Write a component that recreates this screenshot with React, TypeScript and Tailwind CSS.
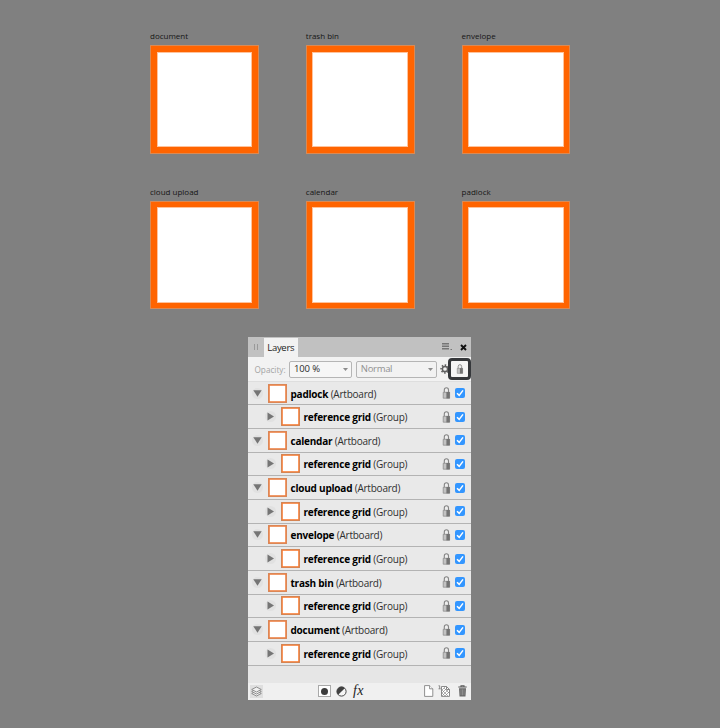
import { useState } from 'react';

const ARTBOARDS = ['document', 'trash bin', 'envelope', 'cloud upload', 'calendar', 'padlock'];

const LockIcon = ({ className = '' }: { className?: string }) => (
  <svg width="9" height="12" viewBox="0 0 9 12" className={className}>
    <path d="M2.3 5.5V3a2.1 2.2 0 0 1 4.2 0v2.5" fill="#eee" stroke="#858585" strokeWidth="1.1" />
    <path d="M1.2 5.3h6.4v5.9H1.2z" fill="#c2c2c2" stroke="#858585" strokeWidth="0.7" />
    <path d="M4.4 5h3.4v6.4H4.4z" fill="#737373" />
  </svg>
);

const GearIcon = () => (
  <svg width="10" height="10" viewBox="0 0 10 10">
    <circle cx="5" cy="5" r="3.9" fill="none" stroke="#606060" strokeWidth="1.6" strokeDasharray="1.55 1.513" strokeDashoffset="0.78" />
    <circle cx="5" cy="5" r="2.6" fill="none" stroke="#606060" strokeWidth="1.5" />
  </svg>
);

const Artboard = ({ name }: { name: string }) => (
  <div>
    <div className="h-[14px] whitespace-nowrap text-[8px] leading-[10px] text-[#161616]">{name}</div>
    <div className="h-[108.8px] w-[108.8px] border border-[#d98a55] bg-[#ff6400] p-[5.5px]">
      <div className="h-full w-full border border-[#ffc39c] bg-white" />
    </div>
  </div>
);

const Select = ({ value, className }: { value: string; className: string }) => (
  <div className={`flex h-[17px] items-center justify-between rounded-[2px] border border-[#b5b5b5] pl-[4px] pr-[3px] ${className}`}>
    <span>{value}</span>
    <svg width="5" height="3" viewBox="0 0 5 3">
      <path d="M0 0h5L2.5 3z" fill="#8c8c8c" />
    </svg>
  </div>
);

interface LayerRowProps {
  name: string;
  type: 'Artboard' | 'Group';
}

const LayerRow = ({ name, type }: LayerRowProps) => {
  const [visible, setVisible] = useState(true);
  const nested = type === 'Group';

  return (
    <div className={`flex h-[23.67px] items-center border-b border-[#b3b3b3] bg-[#e9e9e9] pr-[6px] ${nested ? 'pl-[17px]' : 'pl-[4px]'}`}>
      <div className="flex h-[11px] w-[11px] items-center justify-center rounded-full bg-[#e1e1e1]">
        <svg width="9" height="9" viewBox="0 0 9 9">
          <path d={nested ? 'M1.5 0.5v8L8 4.5z' : 'M0.3 1.3h8.4L4.5 7.7z'} fill="#757575" />
        </svg>
      </div>
      <svg className="ml-[4.5px] shrink-0" width="19" height="19" viewBox="0 0 19 19">
        <rect width="19" height="19" fill={nested ? '#c08a68' : '#d08a62'} />
        <rect x="0.6" y="0.6" width="17.8" height="17.8" fill={nested ? '#f87c34' : '#ee8144'} />
        <rect x="1.8" y="1.8" width="15.4" height="15.4" fill="#fff" />
      </svg>
      <div className="ml-[4px] flex-1 whitespace-nowrap pt-px text-[10px] leading-[14px] tracking-[-0.22px] text-[#303030]">
        <b className="font-bold text-black">{name}</b> ({type})
      </div>
      <LockIcon />
      <button
        onClick={() => setVisible(!visible)}
        className={`ml-[4px] h-[10px] w-[10px] rounded-[2px] ${visible ? 'bg-[#3396ff]' : 'bg-white'}`}
      >
        {visible && (
          <svg width="10" height="10" viewBox="0 0 10 10">
            <path d="M2 5.2L4.2 7.4L8 2.4" fill="none" stroke="#fff" strokeWidth="1.5" />
          </svg>
        )}
      </button>
    </div>
  );
};

const Footer = () => (
  <div className="flex h-[17.4px] items-center bg-[#f0f0f0] pl-[1.5px]">
    <div className="flex h-[13px] w-[13px] items-center justify-center bg-[#dfdfdf]">
      <svg width="11" height="11" viewBox="0 0 11 11" fill="#f0f0f0" stroke="#858585" strokeWidth="0.9">
        <path d="M0.7 7.5L5.5 5l4.8 2.5L5.5 10z" />
        <path d="M0.7 5.5L5.5 3l4.8 2.5L5.5 8z" />
        <path d="M0.7 3.5L5.5 1l4.8 2.5L5.5 6z" />
      </svg>
    </div>
    <div className="ml-[55.5px] flex h-[12px] w-[13px] items-center justify-center border border-[#a9a9a9] bg-white">
      <div className="h-[7px] w-[7px] rounded-full bg-[#3c3c3c]" />
    </div>
    <svg className="ml-[5px]" width="11" height="11" viewBox="0 0 11 11">
      <circle cx="5.5" cy="5.5" r="4.6" fill="#f5f5f5" stroke="#484848" strokeWidth="1" />
      <path d="M8.8 2.2A4.6 4.6 0 0 0 2.2 8.8z" fill="#404040" />
    </svg>
    <span className="ml-[6px] w-[12px] font-['Liberation_Serif',serif] text-[14px] italic leading-[14px] tracking-[0.3px] text-[#222]">fx</span>
    <svg className="ml-[59px]" width="10" height="12" viewBox="0 0 10 12" fill="#fff" stroke="#858585" strokeWidth="0.9">
      <path d="M0.6 0.6h5l3.2 3.2v7.6H0.6z" />
      <path d="M5.6 0.6v3.2h3.2" />
    </svg>
    <svg className="ml-[4px]" width="13" height="12" viewBox="0 0 13 12" stroke="#7d7d7d" strokeWidth="0.9">
      <path d="M3.5 1.5h5l3 3v6.9h-8z" fill="#fff" />
      <path d="M4 5l3-3M4 8l5-5M4 11l7-7M7 11l4-4M4 8l3 3M4 5l6 6M6 3l5 5" strokeWidth="0.6" />
      <path d="M8.5 1.5v3h3" fill="none" />
      <path d="M0.5 0.8h1.2v3M0.5 3.8h2.2" fill="none" />
    </svg>
    <svg className="ml-[6.5px]" width="9" height="12" viewBox="0 0 9 12">
      <path d="M0.3 2h8.4M3 1.6V0.7h3v0.9" fill="none" stroke="#595959" strokeWidth="1.1" />
      <path d="M1 3.3h7L7.5 11.4h-6z" fill="#666" />
      <path d="M3 4.3v6M4.5 4.3v6M6 4.3v6" stroke="#b7b7b7" strokeWidth="0.5" />
    </svg>
  </div>
);

const LayersPanel = () => (
  <div className="ml-[248px] mt-[27.2px] w-[223px] bg-[#e6e6e6]">
    <div className="flex h-[20.8px] items-end bg-[#c1c1c1]">
      <div className="mb-[7px] ml-[6px] flex h-[6px] w-[4px] justify-between">
        <i className="w-px bg-[#999]" />
        <i className="w-px bg-[#999]" />
      </div>
      <div className="ml-[5.5px] h-[19px] w-[34.5px] bg-[#f2f2f2] text-center text-[9.5px] leading-[19px] tracking-[-0.3px] text-[#222]">Layers</div>
      <svg className="mb-[6px] ml-auto" width="12" height="9" viewBox="0 0 12 9">
        <path d="M1 1.8h7M1 4.3h7M1 6.8h7" stroke="#757575" strokeWidth="1.5" />
        <path d="M9.5 7h1.5v1H9.5z" fill="#757575" />
      </svg>
      <svg className="mb-[6.5px] ml-[7px] mr-[4px]" width="7" height="7" viewBox="0 0 7 7">
        <path d="M1 1l5 5M6 1L1 6" stroke="#111" strokeWidth="1.9" />
      </svg>
    </div>
    <div className="flex h-[24.3px] items-center border-b border-[#dedede] bg-[#f2f2f2] pl-[6.5px] text-[9.5px]">
      <span className="w-[34.5px] shrink-0 pt-[2px] text-[8.2px] text-[#a3a3a3]">Opacity:</span>
      <Select value="100 %" className="w-[63px] bg-[#f6f6f6] tracking-[-0.15px] text-[#2b2b2b]" />
      <Select value="Normal" className="ml-[4px] w-[81px] bg-[#f2f2f2] tracking-[-0.3px] text-[#919191]" />
      <div className="ml-[3px] shrink-0">
        <GearIcon />
      </div>
      <div className="-ml-[1.5px] h-[22px] w-[23px] shrink-0 rounded-[4px] border-[3px] border-[#36383b] bg-[#f5f5f5]">
        <div className="flex h-full items-center justify-center">
          <LockIcon className="h-[10px] w-[8px]" />
        </div>
      </div>
    </div>
    {[...ARTBOARDS].reverse().map((name) => (
      <div key={name}>
        <LayerRow name={name} type="Artboard" />
        <LayerRow name="reference grid" type="Group" />
      </div>
    ))}
    <div className="h-[17px]" />
    <Footer />
  </div>
);

export default function App() {
  return (
    <div className="h-[728px] w-[720px] overflow-hidden bg-[#808080] pt-[31px] font-['Open_Sans','Noto_Sans',sans-serif]">
      <div className="ml-[150px] grid w-[421px] grid-cols-[repeat(3,108.8px)] gap-x-[47px] gap-y-[32.8px]">
        {ARTBOARDS.map((name) => (
          <Artboard key={name} name={name} />
        ))}
      </div>
      <LayersPanel />
    </div>
  );
}
